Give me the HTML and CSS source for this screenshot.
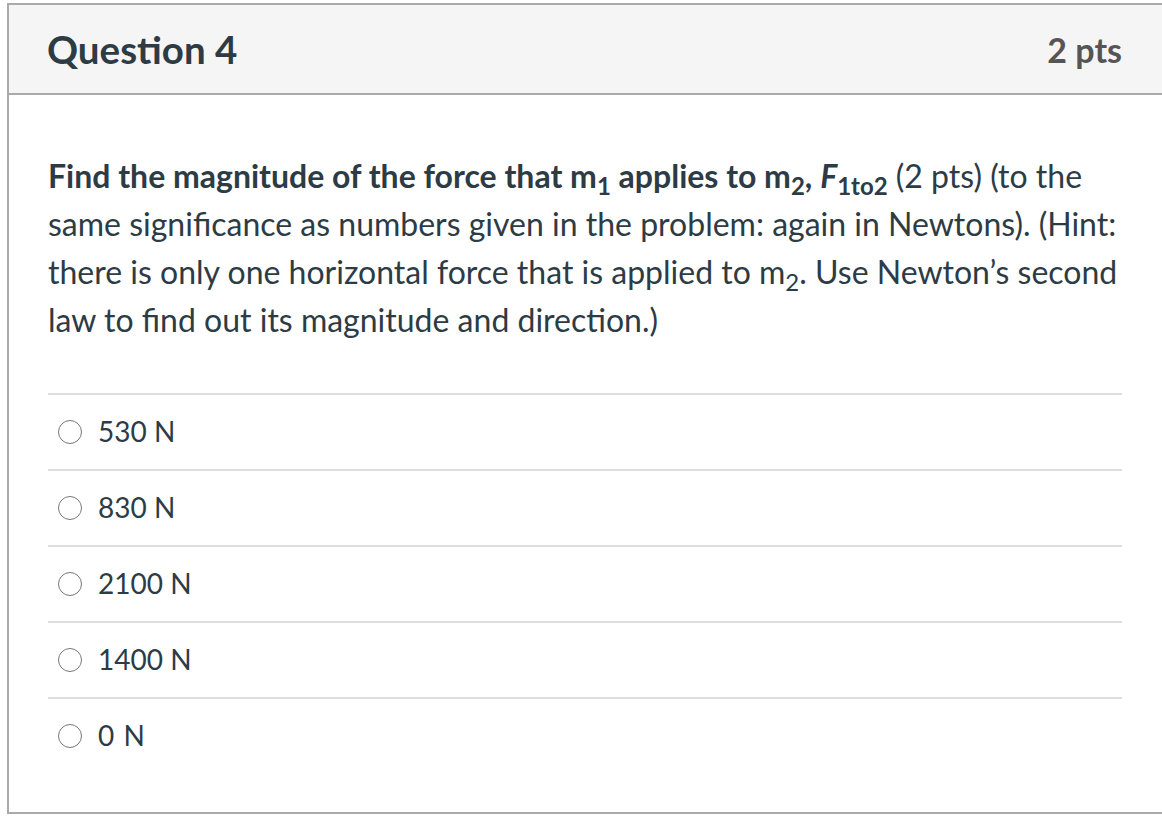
FILE: index.html
```html
<!DOCTYPE html>
<html lang="en">
<head>
<meta charset="utf-8">
<title>Question 4</title>
<link rel="stylesheet" href="styles.css">
</head>
<body>
<div class="question">
  <div class="question-header">
    <span class="question-name">Question 4</span>
    <span class="question-points">2 pts</span>
  </div>
  <div class="question-body">
    <p class="question-text"><strong>Find the magnitude of the force that m<sub>1</sub> applies to m<sub>2</sub>, <em>F</em><sub>1to2</sub></strong> (2 pts) (to the same significance as numbers given in the problem: again in Newtons). (Hint: there is only one horizontal force that is applied to m<sub>2</sub>. Use Newton’s second law to find out its magnitude and direction.)</p>
    <div class="answers">
      <label class="answer"><span class="radio"></span><span class="answer-text">530 N</span></label>
      <label class="answer"><span class="radio"></span><span class="answer-text">830 N</span></label>
      <label class="answer"><span class="radio"></span><span class="answer-text">2100 N</span></label>
      <label class="answer"><span class="radio"></span><span class="answer-text">1400 N</span></label>
      <label class="answer"><span class="radio"></span><span class="answer-text answer-zero">0 N</span></label>
    </div>
  </div>
</div>
</body>
</html>
```
FILE: styles.css
```css
html, body {
  margin: 0;
  padding: 0;
  background: #ffffff;
}

body {
  font-family: Lato, "Open Sans", "Liberation Sans", sans-serif;
  color: #2d3b45;
  padding: 3px 0 0 7px;
}

.question {
  border: 2px solid #aaaaaa;
  border-right: 0;
}

.question-header {
  display: flex;
  align-items: center;
  justify-content: space-between;
  height: 88px;
  padding: 0 40px 0 38px;
  background: #f5f5f5;
  border-bottom: 2px solid #aaaaaa;
}

.question-name {
  font-weight: 700;
  font-size: 38.5px;
  color: #2d3b45;
}

.question-points {
  font-weight: 700;
  font-size: 34px;
  color: #555555;
}

.question-body {
  padding: 57px 40px 39px 39px;
}

.question-text {
  margin: 0 0 49px 0;
  font-size: 32px;
  line-height: 48px;
}

.question-text strong {
  font-weight: 700;
}

.question-text em {
  font-style: italic;
}

.question-text sub {
  font-size: 0.75em;
  line-height: 0;
  vertical-align: -0.28em;
}

.answer {
  display: flex;
  align-items: center;
  height: 74px;
  border-top: 2px solid #dddddd;
  padding-left: 10px;
}

.radio {
  width: 24px;
  height: 24px;
  box-sizing: border-box;
  border: 1.5px solid #777777;
  border-radius: 50%;
  flex: none;
}

.answer-text {
  margin-left: 16px;
  margin-top: -2px;
  font-size: 28px;
  color: #2d3b45;
}

.answer-zero {
  letter-spacing: 1px;
}
```
